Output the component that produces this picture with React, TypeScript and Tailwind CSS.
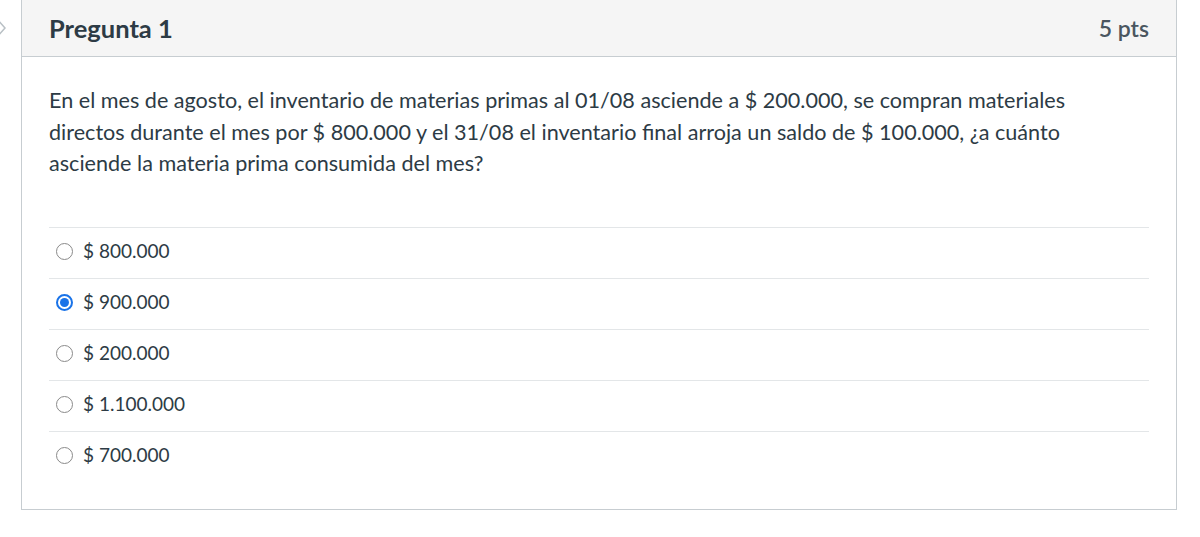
import React from "react";

const answers = [
  { label: "$ 800.000", checked: false },
  { label: "$ 900.000", checked: true },
  { label: "$ 200.000", checked: false },
  { label: "$ 1.100.000", checked: false },
  { label: "$ 700.000", checked: false },
];

function Radio({ checked }: { checked: boolean }) {
  if (checked) {
    return (
      <span className="flex h-[17px] w-[17px] shrink-0 items-center justify-center rounded-full border-2 border-[#1a73e8] bg-white">
        <span className="h-[9px] w-[9px] rounded-full bg-[#1a73e8]" />
      </span>
    );
  }
  return <span className="h-[17px] w-[17px] shrink-0 rounded-full border border-[#8a8a8a] bg-white" />;
}

export default function App() {
  return (
    <div className="relative h-[537px] w-[1200px] bg-white font-['Lato','Liberation_Sans',sans-serif] text-[#2d3b45]">
      {/* flecha del item anterior, cortada */}
      <svg className="absolute left-[-4px] top-[18px]" width="12" height="20" viewBox="0 0 12 20">
        <path d="M2 2 L9 10 L2 18" fill="none" stroke="#b9c0c5" strokeWidth="1.5" />
      </svg>

      <div className="ml-[21px] w-[1156px] border-x border-b border-[#c7cdd1]">
        <div className="flex h-[57px] items-center justify-between border-b border-[#c7cdd1] bg-[#f5f5f5] px-[27px]">
          <h2 className="text-[25.5px] font-bold">Pregunta 1</h2>
          <span className="text-[23px] font-semibold text-[#4a5660]">5 pts</span>
        </div>

        <div className="px-[27px] pt-[28px] pb-[27px]">
          <p className="text-[21.6px] leading-[31.5px]">
            En el mes de agosto, el inventario de materias primas al 01/08 asciende a $ 200.000, se compran materiales
            <br />
            directos durante el mes por $ 800.000 y el 31/08 el inventario final arroja un saldo de $ 100.000, ¿a cuánto
            <br />
            asciende la materia prima consumida del mes?
          </p>

          <div className="mt-[47px]">
            {answers.map((a) => (
              <div
                key={a.label}
                className="flex h-[51px] items-center gap-[10px] border-t border-[#e3e6e8] pl-[7px] pb-[3px]"
              >
                <Radio checked={a.checked} />
                <span className="text-[19px]">{a.label}</span>
              </div>
            ))}
          </div>
        </div>
      </div>
    </div>
  );
}
